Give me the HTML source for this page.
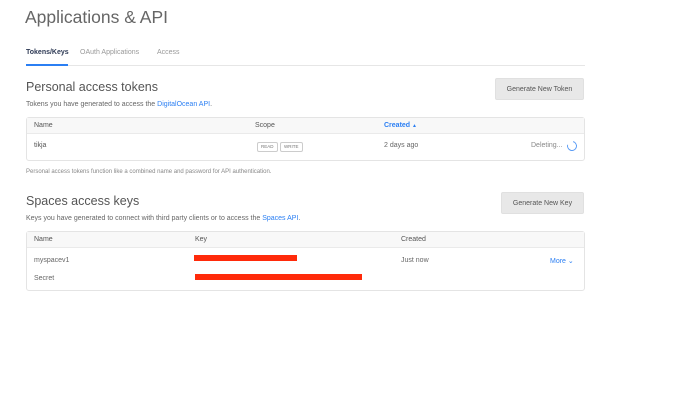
<!DOCTYPE html>
<html><head><meta charset="utf-8"><style>
*{margin:0;padding:0;box-sizing:border-box}
body{width:696px;height:412px;background:#fff;font-family:"Liberation Sans",sans-serif;color:#444;position:relative;overflow:hidden}
.a{position:absolute;white-space:nowrap}
.s{font-size:7px;color:#666}
.blue{color:#2b7ff3}
.btn{position:absolute;background:#e8e8e8;border:1px solid #e0e0e0;border-radius:2px;font-size:7px;color:#555;text-align:center}
.tbl{position:absolute;left:26px;width:559px;border:1px solid #e4e4e4;border-radius:3px;background:#fff}
.hd{height:16px;background:#f8f8f8;border-bottom:1px solid #eaeaea}
.tag{position:absolute;border:1px solid #ccc;border-radius:2px;font-size:4.5px;color:#777;padding:2px 3px;line-height:4px}
</style></head><body>
<div class="a" style="left:25px;top:7px;font-size:17.5px;color:#666">Applications &amp; API</div>
<div class="a" style="left:26px;top:49px;font-size:7px;color:#2e3a55;font-weight:bold">Tokens/Keys</div>
<div class="a" style="left:80px;top:49px;font-size:7px;color:#999">OAuth Applications</div>
<div class="a" style="left:157px;top:49px;font-size:7px;color:#999">Access</div>
<div class="a" style="left:26px;top:65px;width:559px;height:1px;background:#e6e6e6"></div>
<div class="a" style="left:26px;top:64px;width:42px;height:2px;background:#2b7ff3"></div>

<div class="a" style="left:26px;top:80px;font-size:12.5px;color:#555">Personal access tokens</div>
<div class="a s" style="left:26px;top:101px">Tokens you have generated to access the <span class="blue">DigitalOcean API</span>.</div>
<div class="btn" style="left:495px;top:78px;width:89px;height:22px;line-height:21px">Generate New Token</div>
<div class="tbl" style="top:117px;height:44px">
<div class="hd"></div>
<div class="a" style="left:7px;top:4px;font-size:7px;color:#555">Name</div>
<div class="a" style="left:228px;top:4px;font-size:7px;color:#555">Scope</div>
<div class="a blue" style="left:357px;top:4px;font-size:7px;font-weight:bold">Created <span style="font-size:5px">▲</span></div>
<div class="a" style="left:7px;top:24px;font-size:7px;color:#555">tikja</div>
<div class="tag" style="left:230px;top:24px">READ</div>
<div class="tag" style="left:253px;top:24px">WRITE</div>
<div class="a" style="left:357px;top:24px;font-size:7px;color:#666">2 days ago</div>
<div class="a" style="left:504px;top:24px;font-size:7px;color:#888">Deleting...</div>
<div class="a" style="left:540px;top:23px;width:10px;height:10px;border:1.3px solid #5a9cf5;border-top-color:transparent;border-radius:50%;transform:rotate(-30deg)"></div>
</div>
<div class="a" style="left:26px;top:169px;font-size:6px;color:#888">Personal access tokens function like a combined name and password for API authentication.</div>

<div class="a" style="left:26px;top:194px;font-size:12.5px;color:#555">Spaces access keys</div>
<div class="a s" style="left:26px;top:215px">Keys you have generated to connect with third party clients or to access the <span class="blue">Spaces API</span>.</div>
<div class="btn" style="left:501px;top:192px;width:83px;height:22px;line-height:21px">Generate New Key</div>
<div class="tbl" style="top:231px;height:60px">
<div class="hd"></div>
<div class="a" style="left:7px;top:4px;font-size:7px;color:#555">Name</div>
<div class="a" style="left:168px;top:4px;font-size:7px;color:#555">Key</div>
<div class="a" style="left:374px;top:4px;font-size:7px;color:#555">Created</div>
<div class="a" style="left:7px;top:25px;font-size:7px;color:#666">myspacev1</div>
<div class="a" style="left:374px;top:25px;font-size:7px;color:#666">Just now</div>
<div class="a blue" style="left:523px;top:25px;font-size:7px">More <span style="font-size:7px">⌄</span></div>
<div class="a" style="left:7px;top:43px;font-size:7px;color:#666">Secret</div>
</div>
<div class="a" style="left:194px;top:255px;width:103px;height:6px;background:#ff2a0a"></div>
<div class="a" style="left:195px;top:274px;width:167px;height:6px;background:#ff2a0a"></div>
</body></html>
